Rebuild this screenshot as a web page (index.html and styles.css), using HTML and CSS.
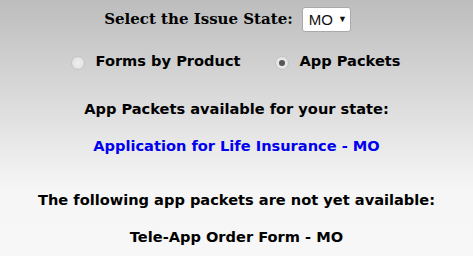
FILE: index.html
```html
<!DOCTYPE html>
<html>
<head>
<meta charset="utf-8">
<link rel="stylesheet" href="styles.css">
</head>
<body>
<div class="page">
  <div class="state-row">
    <span class="state-label">Select the Issue State:</span>
    <span class="select">MO <span class="caret">&#9660;</span></span>
  </div>
  <div class="radio-row">
    <label class="radio-item"><span class="radio"></span>Forms by Product</label>
    <label class="radio-item"><span class="radio checked"></span>App Packets</label>
  </div>
  <p class="heading first">App Packets available for your state:</p>
  <p class="link">Application for Life Insurance - MO</p>
  <p class="heading gap">The following app packets are not yet available:</p>
  <p class="heading">Tele-App Order Form - MO</p>
</div>
</body>
</html>
```

FILE: styles.css
```css
html, body {
  margin: 0;
  padding: 0;
}
body {
  width: 473px;
  height: 256px;
  overflow: hidden;
  background: linear-gradient(to bottom, #bdbdbd 0px, #f6f6f6 190px, #f7f7f7 256px);
  font-family: "DejaVu Sans", Verdana, sans-serif;
  font-weight: bold;
  font-size: 14.6px;
  line-height: 17px;
  color: #000;
}
.page {
  display: flex;
  flex-direction: column;
  align-items: center;
  padding-top: 7px;
}
.state-row {
  display: flex;
  align-items: center;
  gap: 9px;
  margin-right: 18px;
}
.state-label {
  font-family: "DejaVu Serif", Georgia, serif;
  font-size: 15px;
}
.select {
  display: inline-flex;
  align-items: center;
  box-sizing: border-box;
  width: 49px;
  height: 25px;
  padding-left: 6px;
  background: #fff;
  border: 1px solid #a9a9a9;
  border-radius: 3px;
  font-family: "Liberation Sans", Arial, sans-serif;
  font-weight: normal;
  font-size: 15px;
  color: #111;
}
.caret {
  font-size: 9px;
  margin-left: 5px;
}
.radio-row {
  display: flex;
  gap: 34px;
  margin-top: 20px;
  margin-right: 2px;
}
.radio-item {
  display: flex;
  align-items: center;
  gap: 11px;
}
.radio {
  width: 12px;
  height: 12px;
  border-radius: 50%;
  border: 1px solid #c4c4c4;
  background: radial-gradient(circle, #f0f0f0 0%, #dcdcdc 100%);
  position: relative;
  top: 2px;
}
.radio.checked::after {
  content: "";
  position: absolute;
  left: 3px;
  top: 3px;
  width: 6px;
  height: 6px;
  border-radius: 50%;
  background: #555;
}
p {
  margin: 0;
}
.heading {
  margin-top: 20px;
}
.heading.first {
  margin-top: 31px;
}
.link {
  color: #0000ee;
  margin-top: 20px;
}
.heading.gap {
  margin-top: 37px;
}
```
